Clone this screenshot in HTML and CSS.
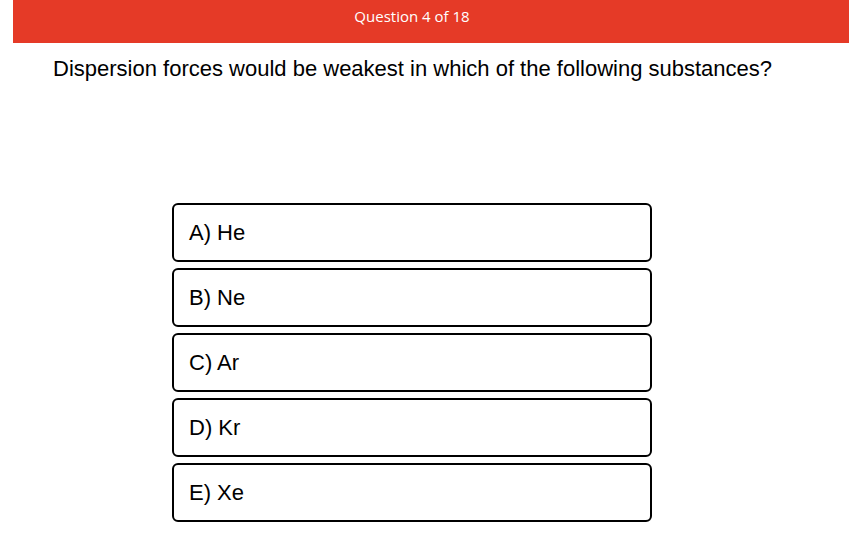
FILE: index.html
```html
<!DOCTYPE html>
<html>
<head>
<meta charset="utf-8">
<link rel="stylesheet" href="styles.css">
</head>
<body>
<div class="page">
  <header class="topbar"><span class="counter">Question 4 of 18</span></header>
  <p class="question">Dispersion forces would be weakest in which of the following substances?</p>
  <div class="options">
    <div class="option">A) He</div>
    <div class="option">B) Ne</div>
    <div class="option">C) Ar</div>
    <div class="option">D) Kr</div>
    <div class="option">E) Xe</div>
  </div>
</div>
</body>
</html>
```

FILE: styles.css
```css
html, body {
  margin: 0;
  padding: 0;
  background: #ffffff;
}
.page {
  width: 836px;
  margin-left: 13px;
}
.topbar {
  height: 43px;
  background: #e53a27;
  display: flex;
  justify-content: center;
  padding-top: 6px;
  box-sizing: border-box;
  padding-right: 38px;
}
.counter {
  font-family: "Open Sans", sans-serif;
  font-size: 15px;
  color: #ffffff;
  line-height: 21px;
}
.question {
  margin: 13px 0 0 40px;
  font-family: "Liberation Sans", Arial, sans-serif;
  font-size: 22px;
  line-height: 26px;
  color: #000000;
}
.options {
  margin: 121px 0 0 159px;
  width: 480px;
  display: flex;
  flex-direction: column;
  gap: 6px;
}
.option {
  height: 59px;
  box-sizing: border-box;
  border: 2px solid #000000;
  border-radius: 6px;
  display: flex;
  align-items: center;
  padding-left: 15px;
  font-family: "Liberation Sans", Arial, sans-serif;
  font-size: 22px;
  color: #000000;
}
```
